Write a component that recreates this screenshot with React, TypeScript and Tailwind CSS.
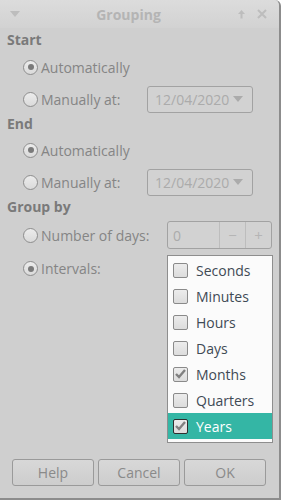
import React from 'react';

// Greyed-out "Grouping" dialog with a checkable interval list.

const font = { fontFamily: '"Open Sans", "Noto Sans", sans-serif' };

const INTERVALS: { label: string; checked: boolean; selected?: boolean }[] = [
  { label: 'Seconds', checked: false },
  { label: 'Minutes', checked: false },
  { label: 'Hours', checked: false },
  { label: 'Days', checked: false },
  { label: 'Months', checked: true },
  { label: 'Quarters', checked: false },
  { label: 'Years', checked: true, selected: true },
];

function Radio({ checked, label }: { checked?: boolean; label: string }) {
  return (
    <div className="flex items-center gap-[3px] pl-[16px]">
      <span className="flex h-[15px] w-[15px] items-center justify-center rounded-full border border-[#8e8e8e] bg-gradient-to-b from-[#ececec] to-[#dadada]">
        {checked && <span className="h-[6px] w-[6px] rounded-full bg-[#7a7a7a]" />}
      </span>
      <span className="text-[14px] text-[#858585]">{label}</span>
    </div>
  );
}

function DateBox() {
  return (
    <div className="flex h-[27px] w-[106px] items-center justify-between rounded-[3px] border border-[#a2a2a2] bg-[#d2d2d2] pl-[7px] pr-[9px]">
      <span className="text-[14px] text-[#ababab]">12/04/2020</span>
      <svg width="10" height="6" viewBox="0 0 10 6">
        <path d="M0 0 L10 0 L5 6 Z" fill="#ababab" />
      </svg>
    </div>
  );
}

function Header({ children }: { children: React.ReactNode }) {
  return (
    <div className="flex h-[20px] items-center text-[14px] font-bold text-[#7a7a7a]">{children}</div>
  );
}

function Check({ checked, selected }: { checked: boolean; selected?: boolean }) {
  return (
    <span
      className={`flex h-[15px] w-[15px] items-center justify-center rounded-[2px] border bg-gradient-to-b from-[#ececec] to-[#dcdcdc] ${
        selected ? 'border-[#2f2f2f]' : 'border-[#8a8a8a]'
      }`}
    >
      {checked && (
        <svg width="11" height="10" viewBox="0 0 11 10">
          <path d="M1 5 L4 8 L10 1" stroke="#808080" strokeWidth="2.4" fill="none" />
        </svg>
      )}
    </span>
  );
}

export default function App() {
  return (
    <div
      style={font}
      className="relative h-[500px] w-[281px] overflow-hidden rounded-tr-[6px] border-r-2 border-b-2 border-[#8c8c8c] bg-[#cfcfcf]"
    >
      {/* title bar */}
      <div className="flex h-[28px] items-center bg-gradient-to-b from-[#dcdcdc] to-[#d2d2d2] px-[10px]">
        <svg width="10" height="6" viewBox="0 0 10 6">
          <path d="M0 0 L10 0 L5 6 Z" fill="#bdbdbd" />
        </svg>
        <span className="flex-1 text-center text-[14px] font-bold text-[#b4b4b4]">Grouping</span>
        <div className="flex items-center gap-[11px] pr-[2px]">
          <svg width="9" height="10" viewBox="0 0 9 10">
            <path d="M4.5 1 L1 5 H3.5 V9.5 H5.5 V5 H8 Z" fill="#bdbdbd" />
          </svg>
          <svg width="10" height="10" viewBox="0 0 10 10">
            <path d="M1 1 L9 9 M9 1 L1 9" stroke="#bdbdbd" strokeWidth="2" />
          </svg>
        </div>
      </div>

      <div className="flex flex-col pl-[7px] pt-[1px]">
        <Header>Start</Header>
        <div className="mt-[4px] flex h-[28px] items-center">
          <Radio checked label="Automatically" />
        </div>
        <div className="mt-[4px] flex h-[28px] items-center">
          <div className="w-[140px]">
            <Radio label="Manually at:" />
          </div>
          <DateBox />
        </div>

        <Header>End</Header>
        <div className="mt-[3px] flex h-[28px] items-center">
          <Radio checked label="Automatically" />
        </div>
        <div className="mt-[4px] flex h-[28px] items-center">
          <div className="w-[140px]">
            <Radio label="Manually at:" />
          </div>
          <DateBox />
        </div>

        <Header>Group by</Header>
        <div className="mt-[5px] flex h-[28px] items-center">
          <div className="w-[160px]">
            <Radio label="Number of days:" />
          </div>
          <div className="flex h-[28px] w-[105px] items-stretch rounded-[3px] border border-[#a2a2a2] bg-[#d2d2d2]">
            <span className="flex flex-1 items-center pl-[5px] text-[14px] text-[#ababab]">0</span>
            <span className="flex w-[26px] items-center justify-center border-l border-[#bdbdbd] text-[15px] text-[#b5b5b5]">
              −
            </span>
            <span className="flex w-[26px] items-center justify-center border-l border-[#bdbdbd] text-[15px] text-[#b5b5b5]">
              +
            </span>
          </div>
        </div>

        <div className="mt-[6px] flex items-start">
          <div className="flex h-[26px] w-[160px] items-center pt-[1px]">
            <Radio checked label="Intervals:" />
          </div>
          <div className="w-[106px] border border-[#8e8e8e] bg-[#fbfbfb] pt-[1px] pb-[3px]">
            {INTERVALS.map((it) => (
              <div
                key={it.label}
                className={`flex h-[26px] items-center gap-[8px] pl-[5px] text-[14px] ${
                  it.selected ? 'bg-[#34b6a5] text-white' : 'text-[#3f4a55]'
                }`}
              >
                <Check checked={it.checked} selected={it.selected} />
                <span>{it.label}</span>
              </div>
            ))}
          </div>
        </div>
      </div>

      {/* buttons */}
      <div className="absolute left-[12px] top-[459px] flex gap-[4px]">
        {['Help', 'Cancel', 'OK'].map((b) => (
          <div
            key={b}
            className="flex h-[27px] w-[82px] items-center justify-center rounded-[3px] border border-[#9a9a9a] bg-gradient-to-b from-[#d8d8d8] to-[#cdcdcd] text-[14px] text-[#8a8a8a]"
          >
            {b}
          </div>
        ))}
      </div>
    </div>
  );
}
